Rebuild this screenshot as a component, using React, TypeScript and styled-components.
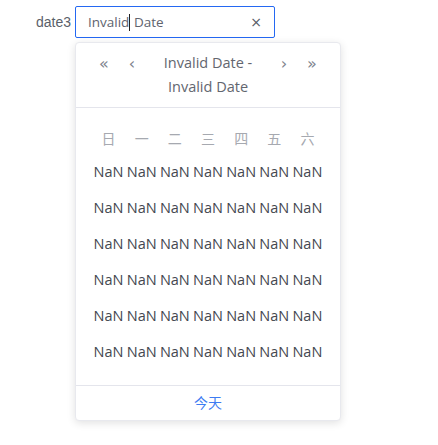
import React from "react";
import styled, { createGlobalStyle } from "styled-components";

const Global = createGlobalStyle`
  html, body { margin: 0; padding: 0; background: #fff; }
  body { font-family: "Open Sans", "Noto Sans CJK SC", sans-serif; }
`;

const Row = styled.div`
  display: flex;
  align-items: flex-start;
  padding-top: 6px;
  padding-bottom: 20px;
`;

const Label = styled.label`
  width: 72px;
  height: 32px;
  line-height: 32px;
  box-sizing: border-box;
  padding-right: 1px;
  text-align: right;
  font-family: "Liberation Sans", Arial, sans-serif;
  font-size: 14px;
  color: #5a5f6a;
`;

const Field = styled.div`
  display: flex;
  flex-direction: column;
  margin-left: 3px;
`;

const InputBox = styled.div`
  width: 200px;
  height: 32px;
  box-sizing: border-box;
  border: 1px solid #2468f2;
  border-radius: 2px;
  display: flex;
  align-items: center;
  padding: 0 12px;
`;

const InputText = styled.span`
  flex: 1;
  font-size: 13.5px;
  color: #60646e;
`;

const Caret = styled.span`
  display: inline-block;
  width: 1px;
  height: 17px;
  background: #222;
  vertical-align: -4px;
`;

const Clear = styled.span`
  font-family: "DejaVu Sans", sans-serif;
  font-size: 14px;
  color: #555b66;
`;

const Popup = styled.div`
  margin-top: 4px;
  width: 266px;
  box-sizing: border-box;
  background: #fff;
  border: 1px solid #e8e9ee;
  border-radius: 4px;
  box-shadow: 0 2px 8px rgba(0, 0, 0, 0.12);
`;

const Header = styled.div`
  display: flex;
  align-items: flex-start;
  padding: 8px 18px;
  border-bottom: 1px solid #e4e5ec;
`;

const NavBtn = styled.span<{ $gap?: number }>`
  width: 20px;
  height: 24px;
  margin-left: ${(p) => p.$gap ?? 0}px;
  display: flex;
  align-items: center;
  justify-content: center;
  color: #80848e;
  font-family: "DejaVu Sans", sans-serif;
  font-size: 16px;
`;

const Title = styled.div`
  flex: 1;
  text-align: center;
  font-size: 14.5px;
  line-height: 24px;
  color: #63666f;
  padding: 0 4px;
`;

const Body = styled.div`
  padding: 16px 16px 15px;
  border-bottom: 1px solid #e4e5ec;
`;

const Grid = styled.div`
  display: grid;
  grid-template-columns: repeat(7, 1fr);
`;

const WeekDay = styled.div`
  height: 30px;
  line-height: 30px;
  text-align: center;
  font-size: 14px;
  color: #a6a9b0;
`;

const Day = styled.div`
  height: 36px;
  line-height: 36px;
  text-align: center;
  font-size: 14.5px;
  color: #44474f;
  white-space: nowrap;
`;

const Footer = styled.div`
  height: 34px;
  line-height: 34px;
  text-align: center;
  font-size: 14px;
  color: #3d7cf2;
`;

const weekdays = ["日", "一", "二", "三", "四", "五", "六"];

export default function App() {
  const days = Array.from({ length: 42 }, (_, i) => i);
  return (
    <>
      <Global />
      <Row>
        <Label>date3</Label>
        <Field>
          <InputBox>
            <InputText>
              Invalid<Caret /> Date
            </InputText>
            <Clear>×</Clear>
          </InputBox>
          <Popup>
            <Header>
              <NavBtn>«</NavBtn>
              <NavBtn $gap={8}>‹</NavBtn>
              <Title>Invalid Date - Invalid Date</Title>
              <NavBtn>›</NavBtn>
              <NavBtn $gap={8}>»</NavBtn>
            </Header>
            <Body>
              <Grid>
                {weekdays.map((w) => (
                  <WeekDay key={w}>{w}</WeekDay>
                ))}
                {days.map((d) => (
                  <Day key={d}>NaN</Day>
                ))}
              </Grid>
            </Body>
            <Footer>今天</Footer>
          </Popup>
        </Field>
      </Row>
    </>
  );
}
